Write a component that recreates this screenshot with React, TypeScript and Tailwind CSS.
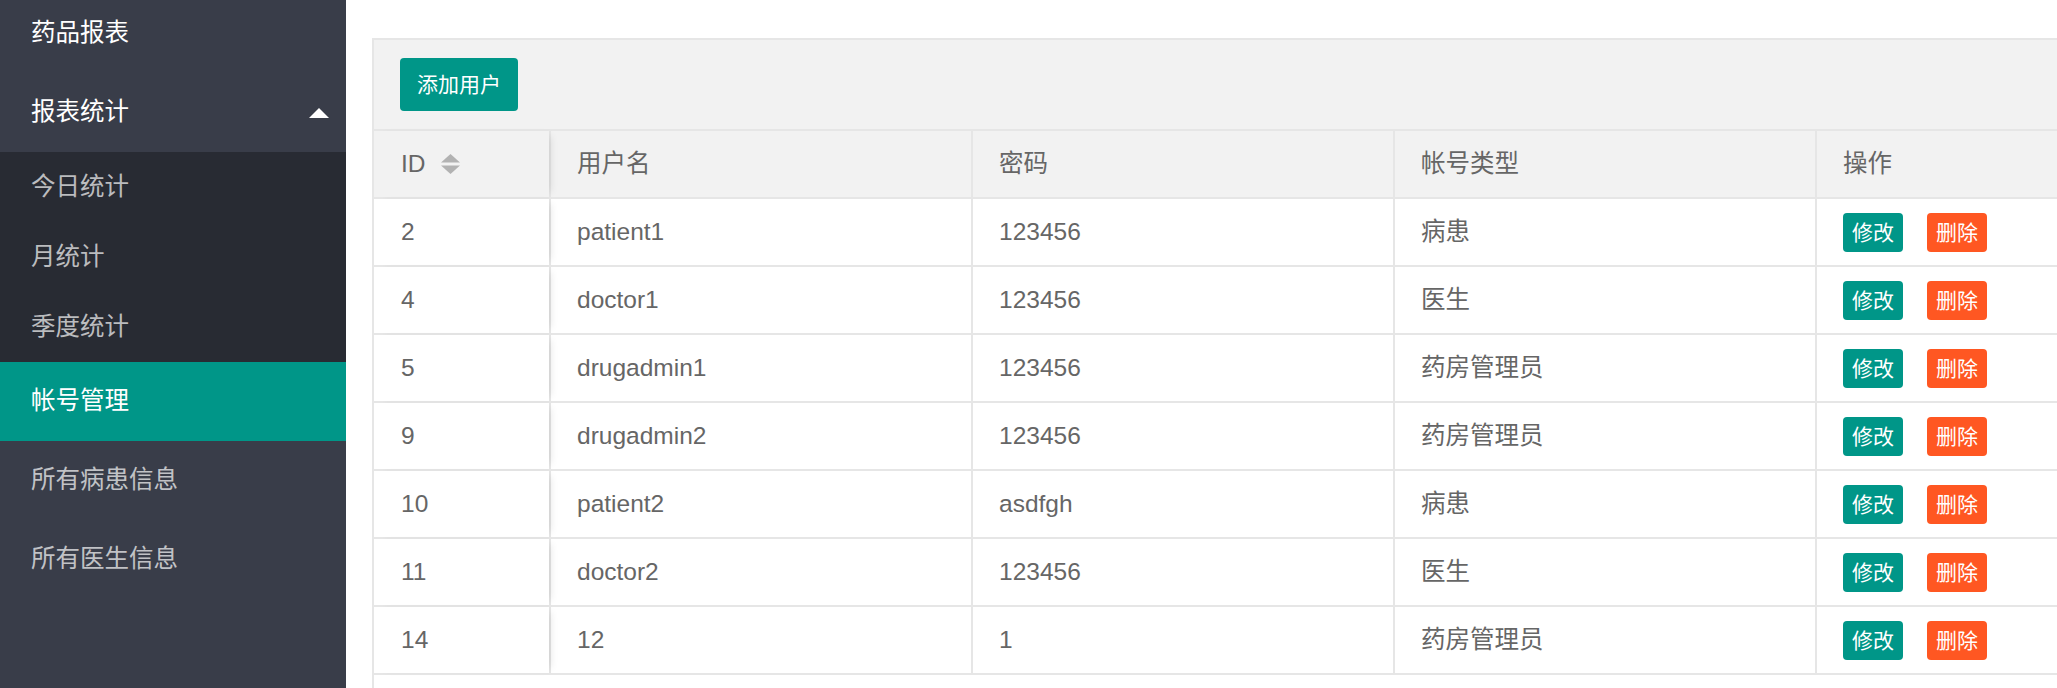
import React from "react";

const font = "font-['Liberation_Sans','Noto_Sans_CJK_SC',sans-serif]";

type NavItem = { label: string; active?: boolean };

const subItems = ["今日统计", "月统计", "季度统计"];

const lowerItems: NavItem[] = [
  { label: "帐号管理", active: true },
  { label: "所有病患信息" },
  { label: "所有医生信息" },
];

const users = [
  { id: 2, name: "patient1", pwd: "123456", type: "病患" },
  { id: 4, name: "doctor1", pwd: "123456", type: "医生" },
  { id: 5, name: "drugadmin1", pwd: "123456", type: "药房管理员" },
  { id: 9, name: "drugadmin2", pwd: "123456", type: "药房管理员" },
  { id: 10, name: "patient2", pwd: "asdfgh", type: "病患" },
  { id: 11, name: "doctor2", pwd: "123456", type: "医生" },
  { id: 14, name: "12", pwd: "1", type: "药房管理员" },
];

const grid = "grid grid-cols-[175px_422px_422px_422px_1fr]";
const cell = "flex items-center pl-[26px] border-l-2 border-[#e6e6e6]";
const idCell =
  "relative z-10 flex items-center pl-[27px] shadow-[6px_0_8px_-5px_rgba(0,0,0,0.12)]";

function SortIcon() {
  return (
    <svg width="19" height="20" viewBox="0 0 19 20" className="ml-[15px]">
      <polygon points="0,8.5 9.5,0 19,8.5" fill="#b2b2b2" />
      <polygon points="0,11.5 9.5,20 19,11.5" fill="#b2b2b2" />
    </svg>
  );
}

function Sidebar() {
  return (
    <aside className="w-[346px] h-[688px] shrink-0 overflow-hidden bg-[#393d49] text-[24.5px]">
      <div className="-mt-[6px]">
        <div className="h-[79px] flex items-center pl-[31px] text-white">药品报表</div>
        <div className="h-[79px] flex items-center justify-between pl-[31px] pr-[17px] text-white">
          <span>报表统计</span>
          <span className="w-0 h-0 border-x-[10.5px] border-x-transparent border-b-[10px] border-b-white" />
        </div>
        <div className="bg-[#282b33]">
          {subItems.map((s) => (
            <div key={s} className="h-[70px] flex items-center pl-[31px] text-white/70">
              {s}
            </div>
          ))}
        </div>
        {lowerItems.map((item) => (
          <div
            key={item.label}
            className={
              item.active
                ? "h-[79px] flex items-center pl-[31px] bg-[#009688] text-white"
                : "h-[79px] flex items-center pl-[31px] text-white/70"
            }
          >
            {item.label}
          </div>
        ))}
      </div>
    </aside>
  );
}

export default function App() {
  return (
    <div className={`flex h-[688px] w-[2057px] overflow-hidden bg-white ${font}`}>
      <Sidebar />
      <main className="flex-1 overflow-hidden pl-[26px] pt-[38px]">
        <div className="w-[1800px] h-[700px] border-2 border-[#e6e6e6] text-[24.5px] text-[#666]">
          <div className="h-[89px] bg-[#f2f2f2] flex items-center pl-[26px]">
            <button className="h-[53px] px-[17px] rounded-[4px] bg-[#009688] text-white text-[21px] leading-none">
              添加用户
            </button>
          </div>
          <div className={`${grid} h-[68px] border-t-2 border-[#e6e6e6] bg-[#f2f2f2]`}>
            <div className={`${idCell} bg-[#f2f2f2]`}>
              <span>ID</span>
              <SortIcon />
            </div>
            <div className={cell}>用户名</div>
            <div className={cell}>密码</div>
            <div className={cell}>帐号类型</div>
            <div className={cell}>操作</div>
          </div>
          {users.map((u, i) => (
            <div
              key={u.id}
              className={`${grid} h-[68px] border-t-2 border-[#e6e6e6] ${
                i === users.length - 1 ? "border-b-2 h-[70px]" : ""
              }`}
            >
              <div className={`${idCell} bg-white`}>{u.id}</div>
              <div className={cell}>{u.name}</div>
              <div className={cell}>{u.pwd}</div>
              <div className={cell}>{u.type}</div>
              <div className={`${cell} gap-[24px]`}>
                <button className="h-[39px] w-[60px] rounded-[4px] bg-[#009688] text-white text-[21px] leading-none">
                  修改
                </button>
                <button className="h-[39px] w-[60px] rounded-[4px] bg-[#ff5722] text-white text-[21px] leading-none">
                  删除
                </button>
              </div>
            </div>
          ))}
        </div>
      </main>
    </div>
  );
}
